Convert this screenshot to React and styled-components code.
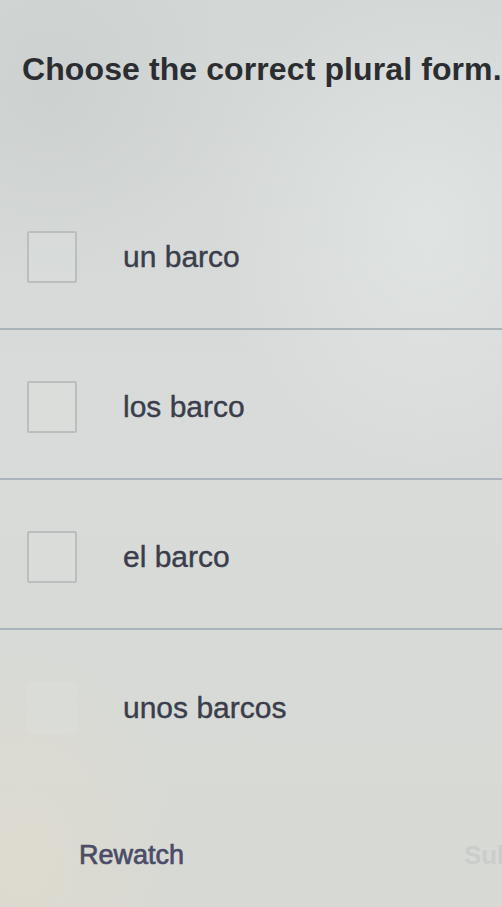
import React from "react";
import styled, { createGlobalStyle } from "styled-components";

const Global = createGlobalStyle`
  html, body { margin: 0; padding: 0; }
  body {
    background: #d6d9d6;
    font-family: "Liberation Sans", Arial, sans-serif;
  }
`;

const Screen = styled.div`
  width: 502px;
  height: 907px;
  overflow: hidden;
  display: flex;
  flex-direction: column;
  background:
    radial-gradient(ellipse 60% 40% at 85% 25%, rgba(232,236,236,0.55), transparent 70%),
    radial-gradient(ellipse 45% 35% at 5% 95%, rgba(226,220,204,0.6), transparent 70%),
    radial-gradient(ellipse 55% 30% at 10% 10%, rgba(196,200,200,0.45), transparent 70%),
    linear-gradient(180deg, #d3d7d6 0%, #d8dbd9 45%, #d7d9d4 100%);
`;

const Header = styled.header`
  height: 180px;
  padding: 49px 0 0 22px;
  box-sizing: border-box;
`;

const Title = styled.h1`
  margin: 0;
  font-size: 32px;
  line-height: 40px;
  font-weight: 700;
  color: #2b2d31;
  white-space: nowrap;
  letter-spacing: 0.1px;
`;

const Options = styled.div`
  display: flex;
  flex-direction: column;
`;

const Row = styled.label`
  height: 150px;
  display: flex;
  align-items: center;
  padding: 6px 0 0 27px;
  gap: 48px;
  border-bottom: ${(p) => (p.$last ? "none" : "2px solid #a9b3ba")};
  box-sizing: border-box;
  cursor: pointer;
`;

const Box = styled.span`
  width: 50px;
  height: 52px;
  flex: none;
  box-sizing: border-box;
  border: 2px solid ${(p) => (p.$faint ? "rgba(185,189,189,0.0)" : "#babebe")};
  border-radius: 2px;
  background: rgba(222,225,223,0.3);
`;

const OptionText = styled.span`
  font-size: 30px;
  line-height: 36px;
  color: #3a3d4b;
  font-weight: 400;
  margin-left: -2px;
  -webkit-text-stroke: 0.4px #3a3d4b;
`;

const Footer = styled.footer`
  flex: 1;
  display: flex;
  align-items: center;
  justify-content: space-between;
  padding: 24px 0 0 79px;
`;

const Rewatch = styled.button`
  border: none;
  background: none;
  padding: 0;
  font-family: "Liberation Sans", Arial, sans-serif;
  font-size: 27px;
  font-weight: 400;
  color: #4b4c68;
  -webkit-text-stroke: 0.7px #4b4c68;
  cursor: pointer;
`;

const Submit = styled.button`
  border: none;
  background: none;
  padding: 0;
  margin-right: -50px;
  font-family: "Liberation Sans", Arial, sans-serif;
  font-size: 26px;
  font-weight: 700;
  color: rgba(186,190,188,0.45);
`;

const options = ["un barco", "los barco", "el barco", "unos barcos"];

export default function App() {
  return (
    <>
      <Global />
      <Screen>
        <Header>
          <Title>Choose the correct plural form.</Title>
        </Header>
        <Options>
          {options.map((o, i) => (
            <Row key={o} $last={i === options.length - 1}>
              <Box $faint={i === options.length - 1} />
              <OptionText>{o}</OptionText>
            </Row>
          ))}
        </Options>
        <Footer>
          <Rewatch>Rewatch</Rewatch>
          <Submit>Submit</Submit>
        </Footer>
      </Screen>
    </>
  );
}
